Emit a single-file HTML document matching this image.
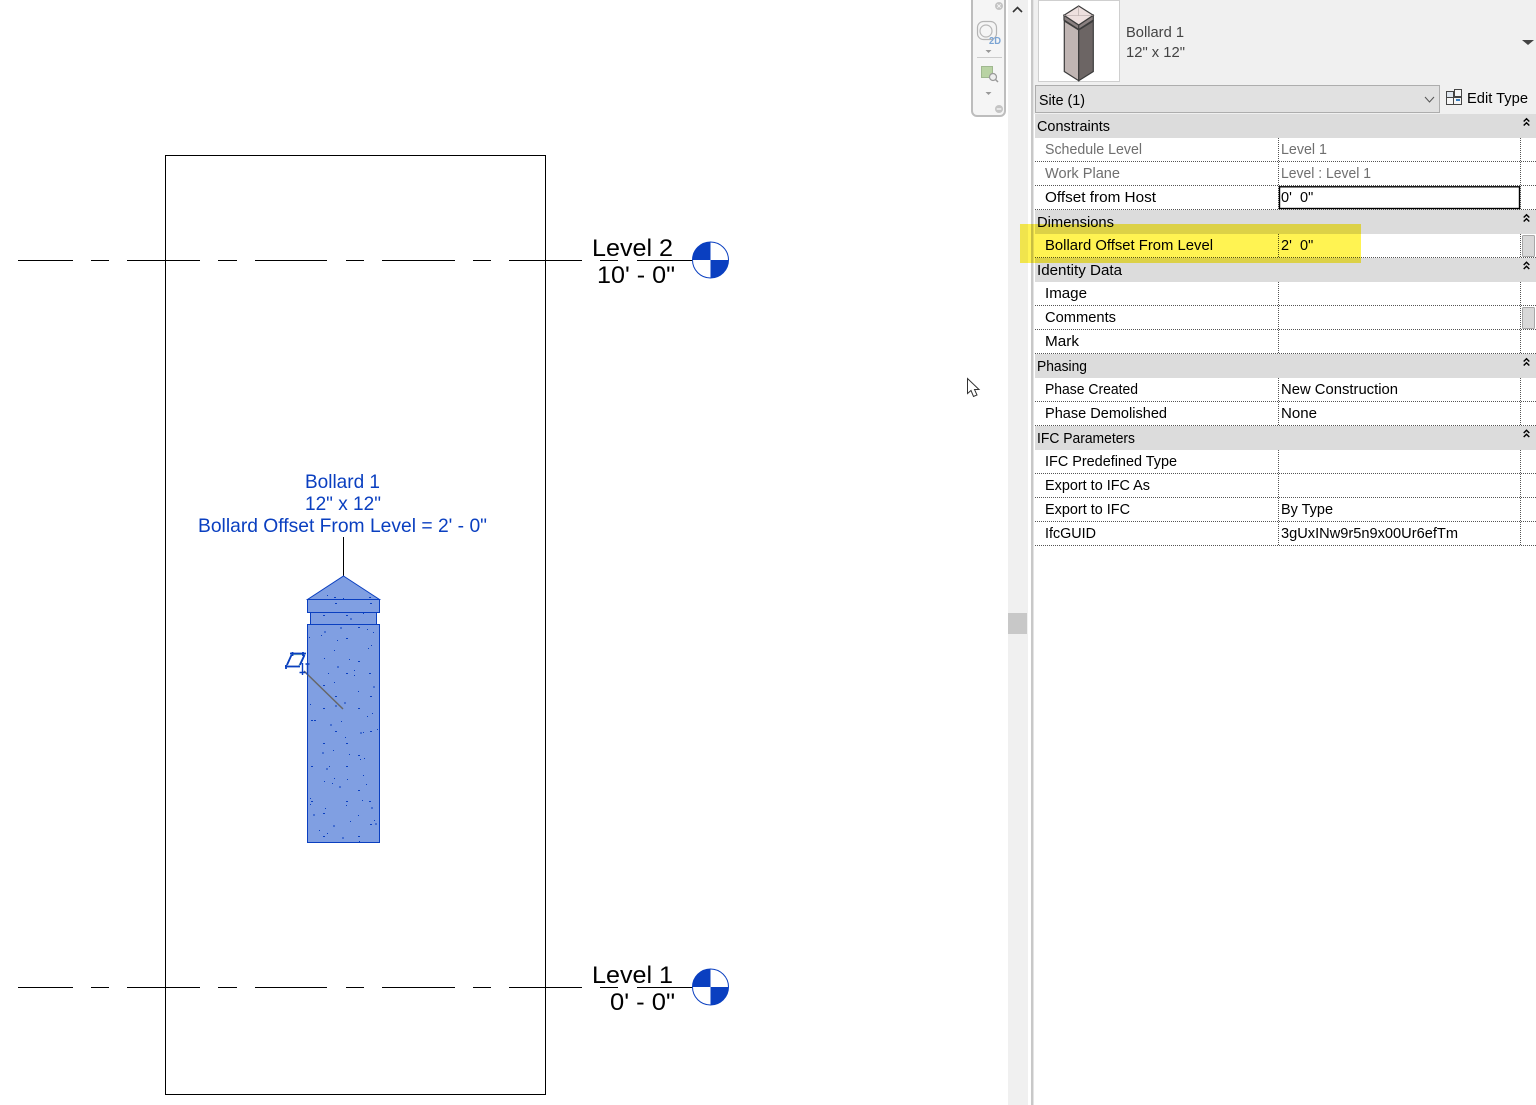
<!DOCTYPE html>
<html><head><meta charset="utf-8">
<style>
html,body{margin:0;padding:0;background:#fff;width:1536px;height:1105px;overflow:hidden}
svg{display:block;position:absolute;left:0;top:0}
text{font-family:"Liberation Sans",sans-serif}
.p text{font-size:14.5px;fill:#000}
.p text.d{fill:#6f6f6f}
.lv text{font-size:24px;fill:#000}
.tag text{font-size:19.5px;fill:#0a3fc0}
</style></head><body>
<svg width="1536" height="1105" viewBox="0 0 1536 1105" xmlns="http://www.w3.org/2000/svg">
<!-- drawing -->
<rect x="165.5" y="155.5" width="380" height="939" fill="none" stroke="#000" stroke-width="1"/>
<path d="M18 260.5H73M91 260.5H109M127 260.5H200M218 260.5H237M255 260.5H327M346 260.5H364M382 260.5H455M473 260.5H491M509 260.5H582M600 260.5H618M637 260.5H692" stroke="#000" fill="none"/>
<path d="M18 987.5H73M91 987.5H109M127 987.5H200M218 987.5H237M255 987.5H327M346 987.5H364M382 987.5H455M473 987.5H491M509 987.5H582M600 987.5H618M637 987.5H692" stroke="#000" fill="none"/>
<g class="lv">
<text x="592" y="256" textLength="81" lengthAdjust="spacingAndGlyphs">Level 2</text>
<text x="597" y="283" textLength="78" lengthAdjust="spacingAndGlyphs">10' - 0"</text>
<text x="592" y="983" textLength="81" lengthAdjust="spacingAndGlyphs">Level 1</text>
<text x="610" y="1010" textLength="65" lengthAdjust="spacingAndGlyphs">0' - 0"</text>
</g>
<g>
<circle cx="710.5" cy="260" r="18" fill="#fff" stroke="#0a3fc0" stroke-width="1"/>
<path d="M710.5 260V242A18 18 0 0 0 692.5 260ZM710.5 260V278A18 18 0 0 0 728.5 260Z" fill="#0a3fc0"/>
<circle cx="710.5" cy="987" r="18" fill="#fff" stroke="#0a3fc0" stroke-width="1"/>
<path d="M710.5 987V969A18 18 0 0 0 692.5 987ZM710.5 987V1005A18 18 0 0 0 728.5 987Z" fill="#0a3fc0"/>
</g>
<g class="tag" text-anchor="start">
<text x="305" y="488" textLength="75" lengthAdjust="spacingAndGlyphs">Bollard 1</text>
<text x="305" y="510" textLength="76" lengthAdjust="spacingAndGlyphs">12" x 12"</text>
<text x="198" y="532" textLength="289" lengthAdjust="spacingAndGlyphs">Bollard Offset From Level = 2' - 0"</text>
</g>
<path d="M343.5 537V576" stroke="#000"/>
<!-- bollard -->
<path d="M343.5 576L379.5 599.5V612.5H376.5V624.5H379.5V842.5H307.5V624.5H310.5V612.5H307.5V599.5Z" fill="#809fe2"/>
<path d="M343.5 576L379.5 599.5H307.5ZM307.5 599.5H379.5V612.5H307.5ZM310.5 612.5V624.5M376.5 612.5V624.5M307.5 624.5H379.5V842.5H307.5Z" fill="none" stroke="#0a3fc0" stroke-width="1"/>
<path shape-rendering="crispEdges" stroke="#0a3fc0" stroke-width="1" fill="none" d="M311 720.5h2M314 720.5h1M331 724v2M341 721.5h1M335 731.5h2M361 732v2M363 732.5h1M370 731.5h2M377 729.5h1M345 737.5h1M323 743.5h2M346 743.5h2M323 752v2M333 750.5h1M349 754.5h1M358 755.5h2M360 759.5h1M364 758.5h1M311 766.5h2M329 766.5h1M327 768v2M346 766.5h2M363 775.5h1M334 778.5h1M347 779.5h1M324 781.5h1M332 783.5h1M340 786v2M366 784.5h1M358 790.5h2M310 798.5h1M311 801.5h2M310 804.5h1M346 801.5h2M362 800.5h1M369 801.5h2M372 807v2M346 805.5h1M325 808.5h1M314 814v2M323 813.5h2M358 815.5h1M350 821.5h1M374 820.5h1M376 823v2M370 824.5h2M334 825v2M319 830.5h1M327 833.5h1M323 836.5h2M343 837v2M358 836.5h2M359 841.5h1M327 595.5h1M334 597.5h2M343 598.5h1M369 597.5h2M335 603.5h2M370 603.5h2M337 612.5h1M323 615.5h2M346 615.5h2M363 613.5h1M351 618v2M341 627v2M358 627.5h2M325 631v2M367 629.5h1M373 632.5h1M309 637.5h1M321 635.5h1M337 640.5h1M346 638.5h2M371 645.5h1M368 648.5h1M334 650.5h1M324 658.5h1M349 659.5h1M358 661.5h2M338 666v2M354 670.5h1M328 673.5h1M346 673.5h2M369 673.5h2M354 675.5h1M323 685.5h2M334 682.5h1M374 686v2M358 691.5h1M335 696.5h2M370 696.5h2M345 702v2M310 704.5h1M336 705v2M358 708.5h2M323 708.5h2M372 713.5h1M367 716.5h1M311 720.5h1M315 720.5h1"/>
<!-- workplane grip -->
<path d="M304 671L343 709" stroke="#666" stroke-width="1.5"/>
<path d="M291.5 654.5H304.5L298.5 666.5H286Z" fill="#fff" stroke="#7fb5b0" stroke-width="1.2"/>
<path d="M290 653.5H306M285 666.5H300M292.5 652V656M303 652V656M286 665V669M291.5 655L287 665M304.5 655L300 665" stroke="#0a3fc0" stroke-width="1.8" fill="none"/>
<path d="M302.5 663V675M299.5 672.5H305.5M307.5 664V675M305.5 664H309.5" stroke="#0a3fc0" stroke-width="1.4" fill="none"/>
<!-- cursor -->
<path d="M967.5 378.5V393.5L971 390.5L973.5 396.5L977 395L974.5 389.5H979Z" fill="#fff" stroke="#333" stroke-width="1"/>
<!-- strip -->
<rect x="1008" y="0" width="20" height="1105" fill="#f0f0f0"/>
<rect x="1031" y="0" width="2.5" height="1105" fill="#c8c8c8"/>
<rect x="1008" y="613" width="19" height="21" fill="#c8c8c8"/>
<path d="M1013 12L1017.5 7.5L1022 12" fill="none" stroke="#333" stroke-width="1.6"/>
<!-- nav bar -->
<rect x="972" y="-6" width="33" height="122" rx="5" fill="#f5f5f5" stroke="#bdbdbd" stroke-width="2"/>
<circle cx="999" cy="6" r="4" fill="#c4c4c4"/>
<path d="M997.3 4.3L1000.7 7.7M1000.7 4.3L997.3 7.7" stroke="#f5f5f5"/>
<circle cx="999" cy="109" r="4" fill="#c4c4c4"/>
<path d="M996.7 109H1001.3" stroke="#f5f5f5" stroke-width="1.4"/>
<rect x="977.5" y="21.5" width="19" height="18" rx="6" fill="none" stroke="#b4b4b4" stroke-width="1.2"/>
<circle cx="986" cy="31" r="6" fill="none" stroke="#b8b8b8" stroke-width="1.2"/>
<text x="989" y="44" textLength="12" lengthAdjust="spacingAndGlyphs" style="font-size:10px;font-weight:bold;fill:#7ba4d4">2D</text>
<path d="M985.5 50H991.5L988.5 53Z" fill="#999"/>
<path d="M977 57.5H1002" stroke="#ccc"/>
<rect x="981.5" y="66.5" width="11" height="11" fill="#b9d3a4" stroke="#a0b890"/>
<circle cx="993" cy="77" r="3.5" fill="#eee" stroke="#9a9a9a" stroke-width="1.2"/>
<path d="M995.5 79.5L998 82" stroke="#999" stroke-width="1.5"/>
<path d="M985.5 92H991.5L988.5 95Z" fill="#999"/>
<!-- panel -->
<rect x="1034" y="0" width="502" height="114" fill="#f0f0f0"/>
<rect x="1038.5" y="0.5" width="81" height="81" fill="#fff" stroke="#cfcfcf"/>
<path d="M1064.3 21V71.5L1078.7 80.7V30Z" fill="#c0b5b3" stroke="#3c3c3c" stroke-width="1.2"/>
<path d="M1093.3 21V71.5L1078.7 80.7V30Z" fill="#6c6564" stroke="#3c3c3c" stroke-width="1.2"/>
<path d="M1064 15.3L1078.7 25V29.5L1064 20ZM1093.3 15.3L1078.7 25V29.5L1093.3 20Z" fill="#8a8080" stroke="#3c3c3c" stroke-width="1.2"/>
<path d="M1078.7 6L1093.3 15.3L1078.7 25L1064 15.3Z" fill="#eee0df" stroke="#3c3c3c" stroke-width="1.2"/>
<path d="M1078.7 6L1078.7 15.5M1064 15.3L1078.7 15.5L1093.3 15.3" stroke="#b0a4a4" stroke-width="0.6" fill="none"/>
<path d="M1522 40H1534L1528 45Z" fill="#444"/>
<rect x="1035.5" y="85.5" width="404" height="27" fill="#e1e1e1" stroke="#adadad"/>
<path d="M1425 97L1429.5 102L1434 97" fill="none" stroke="#555"/>
<g fill="#f5f5f5" stroke="#444" stroke-width="1">
<rect x="1446.5" y="91.5" width="7" height="6" fill="#dfe6ee"/><rect x="1454.5" y="89.5" width="7" height="7"/>
<rect x="1446.5" y="97.5" width="7" height="7"/><rect x="1453.5" y="97.5" width="8" height="7"/>
</g>
<path d="M1456 100H1460" stroke="#3a7fc0" stroke-width="2"/>
<!-- sheet -->
<g fill="#dcdcdc">
<rect x="1035" y="114" width="501" height="24"/>
<rect x="1035" y="210" width="501" height="24"/>
<rect x="1035" y="258" width="501" height="24"/>
<rect x="1035" y="354" width="501" height="24"/>
<rect x="1035" y="426" width="501" height="24"/>
</g>
<path stroke="#555" stroke-dasharray="1 1" fill="none" d="M1035 161.5H1536M1035 185.5H1536M1035 209.5H1536M1035 257.5H1536M1035 305.5H1536M1035 329.5H1536M1035 353.5H1536M1035 401.5H1536M1035 425.5H1536M1035 473.5H1536M1035 497.5H1536M1035 521.5H1536M1035 545.5H1536M1278.5 138V210M1520.5 138V210M1278.5 234V258M1520.5 234V258M1278.5 282V354M1520.5 282V354M1278.5 378V426M1520.5 378V426M1278.5 450V546M1520.5 450V546"/>
<rect x="1279.5" y="186.8" width="240" height="21.7" fill="#fff" stroke="#000" stroke-width="1.4"/>
<g fill="#d8d8d8" stroke="#a8a8a8" stroke-width="1">
<rect x="1522.5" y="235.5" width="12" height="21" rx="1"/>
<rect x="1522.5" y="307.5" width="12" height="21" rx="1"/>
</g>
<path fill="none" stroke="#000" stroke-width="1.4" d="M1523.7 121.5L1526.5 118.7L1529.3 121.5M1523.7 125.5L1526.5 122.7L1529.3 125.5M1523.7 217.5L1526.5 214.7L1529.3 217.5M1523.7 221.5L1526.5 218.7L1529.3 221.5M1523.7 265L1526.5 262.2L1529.3 265M1523.7 269L1526.5 266.2L1529.3 269M1523.7 361.5L1526.5 358.7L1529.3 361.5M1523.7 365.5L1526.5 362.7L1529.3 365.5M1523.7 433L1526.5 430.2L1529.3 433M1523.7 437L1526.5 434.2L1529.3 437"/>
<g class="p">
<text class="d" x="1126" y="37" textLength="58" lengthAdjust="spacingAndGlyphs" style="fill:#444">Bollard 1</text>
<text class="d" x="1126" y="57" textLength="59" lengthAdjust="spacingAndGlyphs" style="fill:#444">12" x 12"</text>
<text x="1039" y="105" textLength="46" lengthAdjust="spacingAndGlyphs">Site (1)</text>
<text x="1467" y="103" textLength="61" lengthAdjust="spacingAndGlyphs">Edit Type</text>
<text x="1037" y="131" textLength="73" lengthAdjust="spacingAndGlyphs">Constraints</text>
<text class="d" x="1045" y="154" textLength="97" lengthAdjust="spacingAndGlyphs">Schedule Level</text>
<text class="d" x="1281" y="154" textLength="46" lengthAdjust="spacingAndGlyphs">Level 1</text>
<text class="d" x="1045" y="178" textLength="75" lengthAdjust="spacingAndGlyphs">Work Plane</text>
<text class="d" x="1281" y="178" textLength="90" lengthAdjust="spacingAndGlyphs">Level : Level 1</text>
<text x="1045" y="202" textLength="111" lengthAdjust="spacingAndGlyphs">Offset from Host</text>
<text x="1281" y="202">0'</text>
<text x="1300" y="202">0"</text>
<text x="1037" y="227" textLength="77" lengthAdjust="spacingAndGlyphs">Dimensions</text>
<text x="1045" y="250" textLength="168" lengthAdjust="spacingAndGlyphs">Bollard Offset From Level</text>
<text x="1281" y="250">2'</text>
<text x="1300" y="250">0"</text>
<text x="1037" y="275" textLength="85" lengthAdjust="spacingAndGlyphs">Identity Data</text>
<text x="1045" y="298" textLength="42" lengthAdjust="spacingAndGlyphs">Image</text>
<text x="1045" y="322" textLength="71" lengthAdjust="spacingAndGlyphs">Comments</text>
<text x="1045" y="346" textLength="34" lengthAdjust="spacingAndGlyphs">Mark</text>
<text x="1037" y="371" textLength="50" lengthAdjust="spacingAndGlyphs">Phasing</text>
<text x="1045" y="394" textLength="93" lengthAdjust="spacingAndGlyphs">Phase Created</text>
<text x="1281" y="394" textLength="117" lengthAdjust="spacingAndGlyphs">New Construction</text>
<text x="1045" y="418" textLength="122" lengthAdjust="spacingAndGlyphs">Phase Demolished</text>
<text x="1281" y="418" textLength="36" lengthAdjust="spacingAndGlyphs">None</text>
<text x="1037" y="443" textLength="98" lengthAdjust="spacingAndGlyphs">IFC Parameters</text>
<text x="1045" y="466" textLength="132" lengthAdjust="spacingAndGlyphs">IFC Predefined Type</text>
<text x="1045" y="490" textLength="105" lengthAdjust="spacingAndGlyphs">Export to IFC As</text>
<text x="1045" y="514" textLength="85" lengthAdjust="spacingAndGlyphs">Export to IFC</text>
<text x="1281" y="514" textLength="52" lengthAdjust="spacingAndGlyphs">By Type</text>
<text x="1045" y="538" textLength="51" lengthAdjust="spacingAndGlyphs">IfcGUID</text>
<text x="1281" y="538" textLength="177" lengthAdjust="spacingAndGlyphs">3gUxINw9r5n9x00Ur6efTm</text>
</g>
<!-- highlighter -->
<rect x="1020" y="224" width="341" height="39" fill="#fff352" style="mix-blend-mode:multiply"/>
</svg>
</body></html>
